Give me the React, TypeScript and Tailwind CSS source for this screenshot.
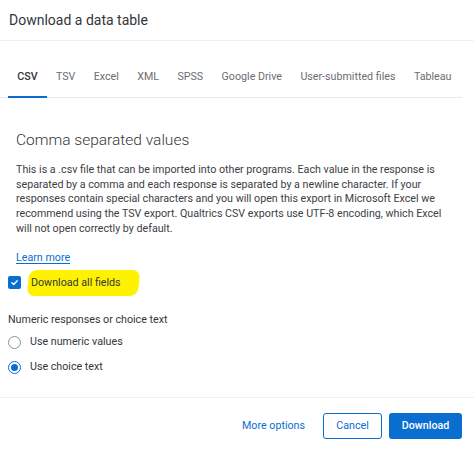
import React from "react";

const TABS = ["CSV", "TSV", "Excel", "XML", "SPSS", "Google Drive", "User-submitted files", "Tableau"];

const DESCRIPTION = [
  "This is a .csv file that can be imported into other programs. Each value in the response is",
  "separated by a comma and each response is separated by a newline character. If your",
  "responses contain special characters and you will open this export in Microsoft Excel we",
  "recommend using the TSV export. Qualtrics CSV exports use UTF-8 encoding, which Excel",
  "will not open correctly by default.",
];

function CheckIcon() {
  return (
    <svg viewBox="0 0 12 12" className="h-[9px] w-[9px]">
      <path d="M2.5 6.2 L5 8.6 L9.6 3.6" fill="none" stroke="white" strokeWidth="1.8" strokeLinecap="round" strokeLinejoin="round" />
    </svg>
  );
}

function Radio({ checked, label }: { checked?: boolean; label: string }) {
  return (
    <label className="flex h-[25px] items-center gap-[9px]">
      <span
        className={`flex h-[13px] w-[13px] items-center justify-center rounded-full border bg-white ${
          checked ? "border-[#0a6ed1]" : "border-[#89919a]"
        }`}
      >
        {checked && <span className="h-[7px] w-[7px] rounded-full bg-[#0a6ed1]" />}
      </span>
      <span className="text-[10.7px] text-[#32363a]">{label}</span>
    </label>
  );
}

export default function App() {
  return (
    <div className="h-[453px] w-[474px] overflow-hidden bg-white font-['Roboto',sans-serif] text-[#32363a]">
      {/* Header */}
      <div className="flex h-[41px] items-center border-b border-[#f0f0f0] pl-[9px]">
        <h1 className="text-[14px] text-[#32363a]">Download a data table</h1>
      </div>

      {/* Tabs */}
      <div className="mr-[12px] mt-[28px] flex border-b border-[#e8e8e8] pl-[8px]">
        {TABS.map((tab, i) => (
          <div
            key={tab}
            className={`-mb-px flex h-[29px] items-start whitespace-nowrap px-[9.2px] text-[10.7px] ${
              i === 0
                ? "border-b-2 border-[#0a6ed1] font-medium text-[#32363a]"
                : "text-[#6a6d70]"
            }`}
          >
            {tab}
          </div>
        ))}
      </div>

      {/* Body */}
      <div className="px-[16px] pt-[32px]">
        <h2 className="text-[15.5px] font-light leading-[20px] text-[#32363a]">Comma separated values</h2>
        <p className="mt-[13px] text-[10.7px] leading-[14.7px] text-[#3c4043]">
          {DESCRIPTION.map((line) => (
            <span key={line} className="block whitespace-nowrap">
              {line}
            </span>
          ))}
        </p>
        <a className="mt-[13px] block text-[10.7px] text-[#0a6ed1] underline underline-offset-2">Learn more</a>
      </div>

      <div className="px-[8px]">
        <label className="mt-[4px] flex items-center">
          <span className="flex h-[13px] w-[13px] items-center justify-center rounded-[2px] bg-[#0a6ed1]">
            <CheckIcon />
          </span>
          <span className="ml-[7px] -skew-x-6 rounded-[8px] bg-[#fff200] py-[5px] pl-[3px] pr-[18px] text-[10.7px] text-[#32363a]">
            <span className="inline-block skew-x-6">Download all fields</span>
          </span>
        </label>

        <div className="mt-[16px] text-[10.7px] text-[#32363a]">Numeric responses or choice text</div>
        <div className="mt-[2px]">
          <Radio label="Use numeric values" />
          <Radio checked label="Use choice text" />
        </div>
      </div>

      {/* Footer */}
      <div className="mt-[17px] flex items-center justify-end gap-[7px] border-t border-[#f0f0f0] pr-[12px] pt-[15px]">
        <button className="mr-[11px] text-[10.7px] text-[#0a6ed1]">More options</button>
        <button className="h-[26px] w-[59px] rounded-[3px] border border-[#0a6ed1] bg-white text-[10.7px] text-[#0a6ed1]">
          Cancel
        </button>
        <button className="h-[26px] w-[73px] rounded-[3px] bg-[#0a6ed1] text-[10.7px] font-medium text-white">
          Download
        </button>
      </div>
    </div>
  );
}
